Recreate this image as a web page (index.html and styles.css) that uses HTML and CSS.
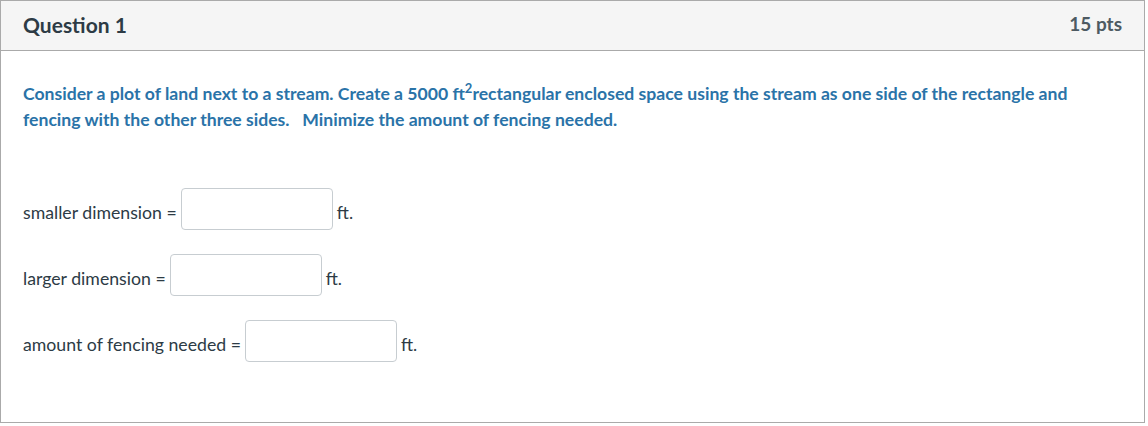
FILE: index.html
```html
<!DOCTYPE html>
<html>
<head>
<meta charset="utf-8">
<link rel="stylesheet" href="styles.css">
</head>
<body>
<div class="question">
  <div class="question-header">
    <span class="question-title">Question 1</span>
    <span class="question-points">15 pts</span>
  </div>
  <div class="question-body">
    <p class="question-text">Consider a plot of land next to a stream. Create a 5000 ft<sup>2</sup>rectangular enclosed space using the stream as one side of the rectangle and fencing with the other three sides.&nbsp;&nbsp; Minimize the amount of fencing needed.</p>
    <div class="answer-row">
      <span class="answer-label">smaller dimension =</span>
      <input class="answer-input" type="text">
      <span class="answer-unit">ft.</span>
    </div>
    <div class="answer-row">
      <span class="answer-label">larger dimension =</span>
      <input class="answer-input" type="text">
      <span class="answer-unit">ft.</span>
    </div>
    <div class="answer-row">
      <span class="answer-label">amount of fencing needed =</span>
      <input class="answer-input" type="text">
      <span class="answer-unit">ft.</span>
    </div>
  </div>
</div>
</body>
</html>
```
FILE: styles.css
```css
html, body {
  margin: 0;
  padding: 0;
  background: #ffffff;
}
body {
  font-family: Lato, "Open Sans", sans-serif;
  color: #2d3b45;
}
.question {
  width: 1143px;
  height: 421px;
  border: 1px solid #aaaaaa;
  box-sizing: content-box;
}
.question-header {
  height: 49px;
  background: #f5f5f5;
  border-bottom: 1px solid #aaaaaa;
  display: flex;
  align-items: center;
  justify-content: space-between;
  padding: 0 22px 0 22px;
}
.question-title {
  font-size: 21px;
  font-weight: 700;
  color: #2d3b45;
  padding-bottom: 2px;
}
.question-points {
  font-size: 19px;
  font-weight: 700;
  color: #4d5a62;
  padding-bottom: 5px;
}
.question-body {
  padding: 30px 22px 0 22px;
}
.question-text {
  margin: 0;
  font-size: 17.6px;
  line-height: 26px;
  font-weight: 700;
  color: #2a73a8;
}
.question-text sup {
  font-size: 13px;
  line-height: 1;
  vertical-align: 7px;
}
.answer-row {
  display: flex;
  align-items: flex-start;
  gap: 4px;
  font-size: 17.7px;
  color: #2d3b45;
  margin-top: 24px;
}
.question-text + .answer-row {
  margin-top: 55px;
}
.answer-label,
.answer-unit {
  padding-top: 14px;
}
.answer-input {
  box-sizing: border-box;
  width: 152px;
  height: 42px;
  border: 1px solid #c7cdd1;
  border-radius: 4px;
  margin: 0;
  padding: 0 8px;
  background: #ffffff;
}
```
